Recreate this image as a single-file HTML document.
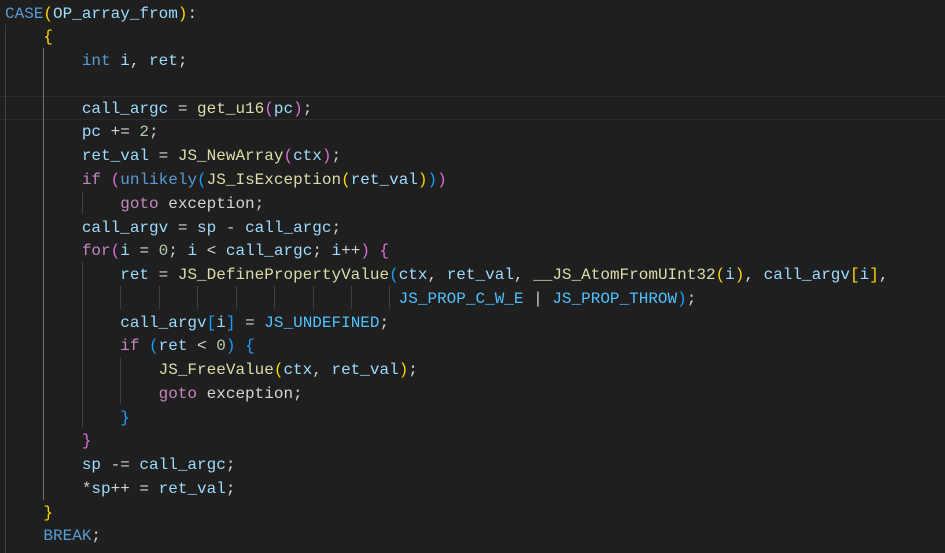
<!DOCTYPE html>
<html><head><meta charset="utf-8"><style>
html,body{margin:0;padding:0;background:#1f1f1f;width:945px;height:553px;overflow:hidden}
#c{position:relative;width:945px;height:553px;font-family:"Liberation Mono",monospace;font-size:16px}
.t{position:absolute;left:0;top:1.5px}
.l{position:absolute;left:5px;height:23.77px;line-height:23.77px;white-space:pre;color:#d4d4d4}
.g{position:absolute;width:1px;background:#404040}
.ga{background:#707070}
.k{color:#569cd6}.v{color:#9cdcfe}.f{color:#dcdcaa}.c{color:#c586c0}.n{color:#b5cea8}.m{color:#4fc1ff}
.y{color:#ffd700}.p{color:#da70d6}.b{color:#179fff}
#hl{position:absolute;left:0;width:945px;top:96px;height:21.5px;border-top:1px solid #2c2c2c;border-bottom:1px solid #2c2c2c}
</style></head><body><div id="c">
<div id="hl"></div>
<div class="g" style="left:5px;top:25px;height:528px"></div>
<div class="g ga" style="left:43px;top:48px;height:452px"></div>
<div class="g" style="left:82px;top:191px;height:23px"></div>
<div class="g" style="left:82px;top:262px;height:166px"></div>
<div class="g" style="left:120px;top:286px;height:23px"></div>
<div class="g" style="left:120px;top:357px;height:47px"></div>
<div class="g" style="left:159px;top:286px;height:23px"></div>
<div class="g" style="left:197px;top:286px;height:23px"></div>
<div class="g" style="left:236px;top:286px;height:23px"></div>
<div class="g" style="left:274px;top:286px;height:23px"></div>
<div class="g" style="left:313px;top:286px;height:23px"></div>
<div class="g" style="left:351px;top:286px;height:23px"></div>
<div class="g" style="left:389px;top:286px;height:23px"></div>
<div class="t">
<div class="l" style="top:1px"><span class="k">CASE</span><span class="y">(</span><span class="v">OP_array_from</span><span class="y">)</span>:</div>
<div class="l" style="top:24.8px">    <span class="y">{</span></div>
<div class="l" style="top:48.5px">        <span class="k">int</span> <span class="v">i</span>, <span class="v">ret</span>;</div>
<div class="l" style="top:96.1px">        <span class="v">call_argc</span> = <span class="f">get_u16</span><span class="p">(</span><span class="v">pc</span><span class="p">)</span>;</div>
<div class="l" style="top:119.9px">        <span class="v">pc</span> += <span class="n">2</span>;</div>
<div class="l" style="top:143.7px">        <span class="v">ret_val</span> = <span class="f">JS_NewArray</span><span class="p">(</span><span class="v">ctx</span><span class="p">)</span>;</div>
<div class="l" style="top:167.4px">        <span class="c">if</span> <span class="p">(</span><span class="k">unlikely</span><span class="b">(</span><span class="f">JS_IsException</span><span class="y">(</span><span class="v">ret_val</span><span class="y">)</span><span class="b">)</span><span class="p">)</span></div>
<div class="l" style="top:191.2px">            <span class="c">goto</span> exception;</div>
<div class="l" style="top:215px">        <span class="v">call_argv</span> = <span class="v">sp</span> - <span class="v">call_argc</span>;</div>
<div class="l" style="top:238.7px">        <span class="c">for</span><span class="p">(</span><span class="v">i</span> = <span class="n">0</span>; <span class="v">i</span> &lt; <span class="v">call_argc</span>; <span class="v">i</span>++<span class="p">)</span> <span class="p">{</span></div>
<div class="l" style="top:262.5px">            <span class="v">ret</span> = <span class="f">JS_DefinePropertyValue</span><span class="b">(</span><span class="v">ctx</span>, <span class="v">ret_val</span>, <span class="f">__JS_AtomFromUInt32</span><span class="y">(</span><span class="v">i</span><span class="y">)</span>, <span class="v">call_argv</span><span class="y">[</span><span class="v">i</span><span class="y">]</span>,</div>
<div class="l" style="top:286.2px">                                         <span class="m">JS_PROP_C_W_E</span> | <span class="m">JS_PROP_THROW</span><span class="b">)</span>;</div>
<div class="l" style="top:310px">            <span class="v">call_argv</span><span class="b">[</span><span class="v">i</span><span class="b">]</span> = <span class="m">JS_UNDEFINED</span>;</div>
<div class="l" style="top:333.8px">            <span class="c">if</span> <span class="b">(</span><span class="v">ret</span> &lt; <span class="n">0</span><span class="b">)</span> <span class="b">{</span></div>
<div class="l" style="top:357.5px">                <span class="f">JS_FreeValue</span><span class="y">(</span><span class="v">ctx</span>, <span class="v">ret_val</span><span class="y">)</span>;</div>
<div class="l" style="top:381.3px">                <span class="c">goto</span> exception;</div>
<div class="l" style="top:405px">            <span class="b">}</span></div>
<div class="l" style="top:428.8px">        <span class="p">}</span></div>
<div class="l" style="top:452.6px">        <span class="v">sp</span> -= <span class="v">call_argc</span>;</div>
<div class="l" style="top:476.3px">        *<span class="v">sp</span>++ = <span class="v">ret_val</span>;</div>
<div class="l" style="top:500.1px">    <span class="y">}</span></div>
<div class="l" style="top:523.9px">    <span class="k">BREAK</span>;</div>
</div>
</div></body></html>
